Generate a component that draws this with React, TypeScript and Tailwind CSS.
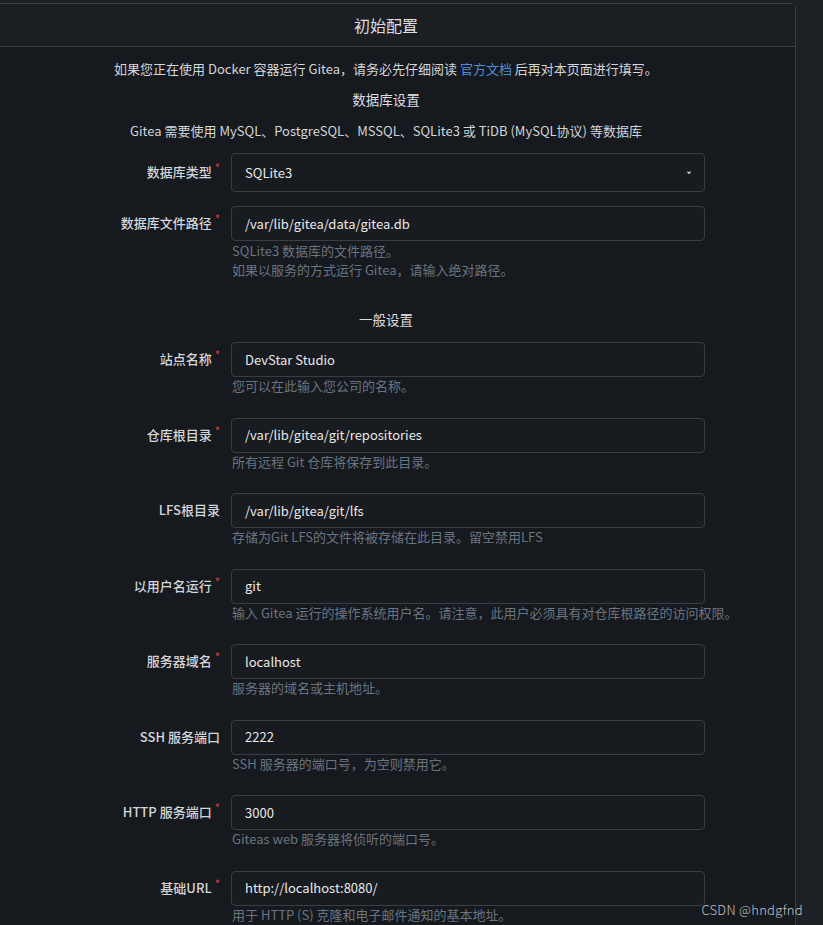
import { ChevronDown } from "lucide-react";

type Field = {
  label: string;
  value: string;
  help: string;
  required?: boolean;
};

const generalFields: Field[] = [
  { label: "站点名称", value: "DevStar Studio", help: "您可以在此输入您公司的名称。", required: true },
  { label: "仓库根目录", value: "/var/lib/gitea/git/repositories", help: "所有远程 Git 仓库将保存到此目录。", required: true },
  { label: "LFS根目录", value: "/var/lib/gitea/git/lfs", help: "存储为Git LFS的文件将被存储在此目录。留空禁用LFS" },
  { label: "以用户名运行", value: "git", help: "输入 Gitea 运行的操作系统用户名。请注意，此用户必须具有对仓库根路径的访问权限。", required: true },
  { label: "服务器域名", value: "localhost", help: "服务器的域名或主机地址。", required: true },
  { label: "SSH 服务端口", value: "2222", help: "SSH 服务器的端口号，为空则禁用它。" },
  { label: "HTTP 服务端口", value: "3000", help: "Giteas web 服务器将侦听的端口号。", required: true },
  { label: "基础URL", value: "http://localhost:8080/", help: "用于 HTTP (S) 克隆和电子邮件通知的基本地址。", required: true },
];

function Label({ text, required }: { text: string; required?: boolean }) {
  return (
    <div className="w-[243px] shrink-0 text-right text-[13px] font-medium text-[#d3d6da] leading-[33px]">
      {text}
      {required && <span className="relative -top-[5px] ml-[3px] text-[11px] text-[#d13b3b]">*</span>}
    </div>
  );
}

function Input({ value }: { value: string }) {
  return (
    <div className="flex h-[35px] w-[474px] items-center rounded-[4px] border border-[#393d44] bg-[#181b1f] px-[13px] text-[13px] text-[#e8e9ea]">
      {value}
    </div>
  );
}

export default function App() {
  return (
    <div
      className="relative h-[925px] w-[823px] overflow-hidden bg-[#1d2024] pt-[3px]"
      style={{ fontFamily: '"Noto Sans CJK SC", "Noto Sans", sans-serif' }}
    >
      <div className="-ml-6 w-[820px] rounded-tr-[4px] border border-[#3a3e45] bg-[#16191d]">
        {/* Header */}
        <div className="flex h-[43px] items-center justify-center border-b border-[#3a3e45] bg-[#1b1e22] text-[16px] text-[#dcdfe2]">
          初始配置
        </div>

        <div className="pt-[12px] pb-10 text-[13px] text-[#d3d6da]">
          <p className="text-center leading-[20px]">
            如果您正在使用 Docker 容器运行 Gitea，请务必先仔细阅读{" "}
            <span className="text-[#4a8fdb]">官方文档</span> 后再对本页面进行填写。
          </p>
          <h4 className="mt-[10px] text-center text-[13.5px] leading-[20px] text-[#dcdfe2]">数据库设置</h4>
          <p className="mt-[12px] text-center leading-[20px]">
            Gitea 需要使用 MySQL、PostgreSQL、MSSQL、SQLite3 或 TiDB (MySQL协议) 等数据库
          </p>

          {/* DB type */}
          <div className="mt-[12px] flex items-start gap-[11px]">
            <div className="w-[243px] shrink-0 text-right text-[13px] font-medium text-[#d3d6da] leading-[37px]">
              数据库类型
              <span className="relative -top-[5px] ml-[3px] text-[11px] text-[#d13b3b]">*</span>
            </div>
            <div className="flex h-[39px] w-[474px] items-center justify-between rounded-[4px] border border-[#393d44] bg-[#181b1f] pl-[13px] pr-[10px] text-[13px] text-[#e8e9ea]">
              SQLite3
              <ChevronDown size={10} strokeWidth={0} className="fill-[#c9ccd0]" />
            </div>
          </div>

          {/* DB path */}
          <div className="mt-[14px] flex items-start gap-[11px]">
            <Label text="数据库文件路径" required />
            <div>
              <Input value="/var/lib/gitea/data/gitea.db" />
              <div className="pl-px text-[13px] leading-[19px] text-[#697582]">
                SQLite3 数据库的文件路径。
                <br />
                如果以服务的方式运行 Gitea，请输入绝对路径。
              </div>
            </div>
          </div>

          <h4 className="mt-[30px] text-center text-[13.5px] leading-[20px] text-[#dcdfe2]">一般设置</h4>

          <div className="mt-[13px] flex flex-col gap-[23.5px]">
            {generalFields.map((f) => (
              <div key={f.label} className="flex items-start gap-[11px]">
                <Label text={f.label} required={f.required} />
                <div>
                  <Input value={f.value} />
                  <div className="whitespace-nowrap pl-px text-[13px] leading-[17px] text-[#697582]">{f.help}</div>
                </div>
              </div>
            ))}
          </div>
        </div>
      </div>

      <div className="absolute right-[20px] top-[900px] text-[13px] font-light tracking-[0.3px] text-[#c4c6c9]">CSDN @hndgfnd</div>
    </div>
  );
}
